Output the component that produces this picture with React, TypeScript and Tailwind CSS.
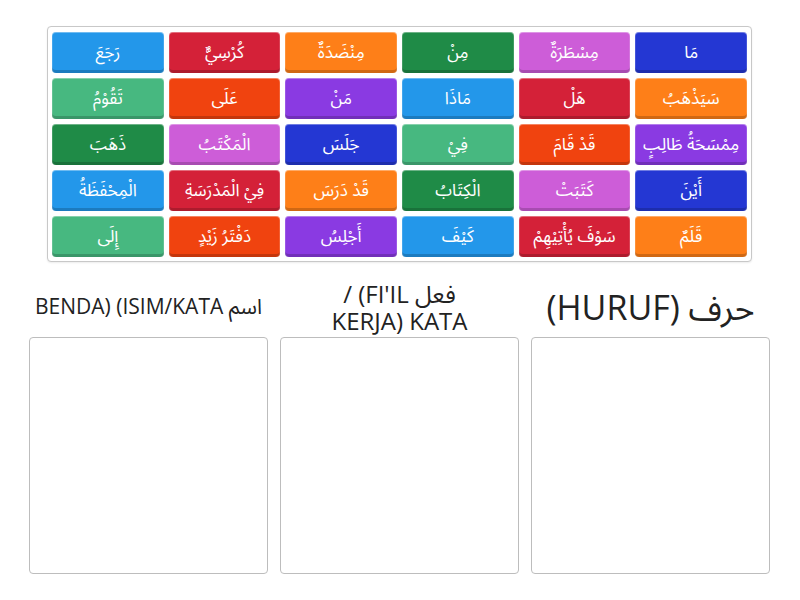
import React from "react";

type Tile = { t: string; c: string };

const C = {
  royal: "bg-[#2437d3]",
  orchid: "bg-[#cd5dd8]",
  dgreen: "bg-[#1f8b47]",
  orange: "bg-[#fe7f18]",
  red: "bg-[#d42138]",
  blue: "bg-[#2397ea]",
  lgreen: "bg-[#47b880]",
  redor: "bg-[#f0430f]",
  purple: "bg-[#8a3ae2]",
};

const tiles: Tile[] = [
  { t: "مَا", c: C.royal },
  { t: "مِسْطَرَةٌ", c: C.orchid },
  { t: "مِنْ", c: C.dgreen },
  { t: "مِنْضَدَةٌ", c: C.orange },
  { t: "كُرْسِيٌّ", c: C.red },
  { t: "رَجَعَ", c: C.blue },

  { t: "سَيَذْهَبُ", c: C.orange },
  { t: "هَلْ", c: C.red },
  { t: "مَاذَا", c: C.blue },
  { t: "مَنْ", c: C.purple },
  { t: "عَلَى", c: C.redor },
  { t: "تَقُوْمُ", c: C.lgreen },

  { t: "مِمْسَحَةُ طَالِبٍ", c: C.purple },
  { t: "قَدْ قَامَ", c: C.redor },
  { t: "فِيْ", c: C.lgreen },
  { t: "جَلَسَ", c: C.royal },
  { t: "الْمَكْتَبُ", c: C.orchid },
  { t: "ذَهَبَ", c: C.dgreen },

  { t: "أَيْنَ", c: C.royal },
  { t: "كَتَبَتْ", c: C.orchid },
  { t: "الْكِتَابُ", c: C.dgreen },
  { t: "قَدْ دَرَسَ", c: C.orange },
  { t: "فِيْ الْمَدْرَسَةِ", c: C.red },
  { t: "الْمِحْفَظَةُ", c: C.blue },

  { t: "قَلَمٌ", c: C.orange },
  { t: "سَوْفَ يُأْتِيْهِمْ", c: C.red },
  { t: "كَيْفَ", c: C.blue },
  { t: "أَجْلِسُ", c: C.purple },
  { t: "دَفْتَرُ زَيْدٍ", c: C.redor },
  { t: "إِلَى", c: C.lgreen },
];

const font = { fontFamily: '"Open Sans", "Noto Sans Arabic", "DejaVu Sans", sans-serif' };

export default function App() {
  return (
    <div className="w-[800px] h-[600px] bg-white overflow-hidden" style={font}>
      <div className="ml-[47px] mt-[26px] w-[705px] h-[236px] rounded-[4px] border border-[#c8c8c8] bg-white pt-[5px] pb-[4px] px-[4px] shadow-[0_1px_2px_rgba(0,0,0,0.08)]">
        <div dir="rtl" className="grid grid-cols-6 grid-rows-5 gap-[5px] h-full">
          {tiles.map((x, i) => (
            <div
              key={i}
              className={`${x.c} rounded-[4px] flex items-center justify-center text-white text-[17px] leading-none whitespace-nowrap overflow-hidden shadow-[inset_0_1px_0_rgba(255,255,255,0.35),inset_1px_0_0_rgba(255,255,255,0.15),inset_-1px_0_0_rgba(255,255,255,0.15),inset_0_-3px_0_rgba(0,0,0,0.18)]`}
            >
              <span className="pb-[2px]">{x.t}</span>
            </div>
          ))}
        </div>
      </div>

      <div className="ml-[29px] w-[741px] grid grid-cols-3 gap-x-[12px] gap-y-0 mt-[14px]">
        <div className="h-[61px] flex items-center justify-center text-[#222] text-[21px] leading-none whitespace-nowrap">
          <span dir="ltr">BENDA) (ISIM/KATA اسم</span>
        </div>
        <div className="h-[61px] flex flex-col items-center justify-center text-[#222] text-[24px] leading-[27px] whitespace-nowrap">
          <span dir="ltr">/ (FI'IL فعل</span>
          <span dir="ltr">KERJA) KATA</span>
        </div>
        <div className="h-[61px] flex items-center justify-center text-[#222] text-[34px] leading-none whitespace-nowrap">
          <span dir="ltr">(HURUF) حرف</span>
        </div>

        <div className="h-[237px] rounded-[4px] border border-[#bdbdbd] bg-white"></div>
        <div className="h-[237px] rounded-[4px] border border-[#bdbdbd] bg-white"></div>
        <div className="h-[237px] rounded-[4px] border border-[#bdbdbd] bg-white"></div>
      </div>
    </div>
  );
}
